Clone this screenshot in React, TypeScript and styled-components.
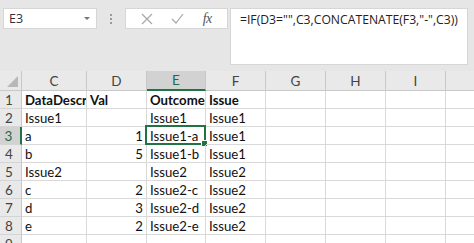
import React from "react";
import styled, { createGlobalStyle } from "styled-components";

const GlobalStyle = createGlobalStyle`
  html, body {
    margin: 0;
    padding: 0;
    background: #e6e6e6;
  }
  * {
    box-sizing: border-box;
  }
`;

const Sheet = styled.div`
  width: 474px;
  height: 243px;
  overflow: hidden;
  background: #e6e6e6;
  font-family: Lato, "Noto Sans", sans-serif;
`;

const FormulaBar = styled.div`
  display: flex;
  align-items: flex-start;
  height: 65px;
  padding: 8px 6px 0 3px;
  margin-bottom: 6px;
`;

const NameBox = styled.div`
  display: flex;
  align-items: center;
  justify-content: space-between;
  width: 94px;
  height: 21px;
  padding: 0 6px 0 5px;
  background: #fff;
  border: 1px solid #d6d6d6;
  font-family: "Open Sans", sans-serif;
  font-size: 12.5px;
  color: #333;
`;

const Caret = styled.span`
  width: 0;
  height: 0;
  border-left: 3px solid transparent;
  border-right: 3px solid transparent;
  border-top: 3px solid #777;
`;

const Grip = styled.div`
  display: flex;
  flex-direction: column;
  gap: 2px;
  width: 28px;
  height: 21px;
  align-items: center;
  justify-content: center;
`;

const GripDot = styled.span`
  width: 2px;
  height: 2px;
  background: #9a9a9a;
`;

const ButtonBox = styled.div`
  display: flex;
  align-items: center;
  justify-content: space-around;
  width: 103px;
  height: 21px;
  background: #fff;
  border: 1px solid #d6d6d6;
  padding: 0 6px;
`;

const FxLabel = styled.span`
  font-family: "Liberation Serif", serif;
  font-style: italic;
  font-size: 14px;
  color: #555;
  letter-spacing: -0.5px;
`;

const FormulaInput = styled.div`
  flex: 1;
  height: 57px;
  margin-left: 2px;
  padding: 2px 0 0 9px;
  background: #fff;
  border: 1px solid #d6d6d6;
  font-family: "Open Sans", sans-serif;
  font-size: 12.2px;
  color: #222;
  white-space: nowrap;
  overflow: hidden;
`;

const Grid = styled.div`
  display: grid;
  grid-template-columns: 22px 65px 60px 59px 60px 60px 60px 60px 70px;
  grid-auto-rows: 18px;
  grid-template-rows: 20px;
  background: #fff;
`;

const Corner = styled.div`
  background: #e9e9e9;
  border-right: 1px solid #c8c8c8;
  border-bottom: 1px solid #c8c8c8;
  display: flex;
  align-items: flex-end;
  justify-content: flex-end;
  padding: 0 3px 3px 0;
`;

const ColHead = styled.div<{ $active?: boolean }>`
  display: flex;
  align-items: center;
  justify-content: center;
  background: ${(p) => (p.$active ? "#d2d2d2" : "#e9e9e9")};
  border-right: 1px solid #c8c8c8;
  border-bottom: ${(p) => (p.$active ? "2px solid #217346" : "1px solid #c8c8c8")};
  color: ${(p) => (p.$active ? "#1e6b41" : "#444")};
  font-size: 13.5px;
`;

const RowHead = styled.div<{ $active?: boolean }>`
  display: flex;
  align-items: center;
  justify-content: center;
  background: ${(p) => (p.$active ? "#d2d2d2" : "#e9e9e9")};
  border-right: ${(p) => (p.$active ? "2px solid #217346" : "1px solid #c8c8c8")};
  border-bottom: 1px solid #d4d4d4;
  color: ${(p) => (p.$active ? "#1e6b41" : "#444")};
  font-size: 13.5px;
  padding-right: 3px;
`;

const Cell = styled.div<{ $num?: boolean; $bold?: boolean; $selected?: boolean }>`
  position: relative;
  display: flex;
  align-items: center;
  justify-content: ${(p) => (p.$num ? "flex-end" : "flex-start")};
  padding: 0 3px;
  border-right: 1px solid #d9d9d9;
  border-bottom: 1px solid #d9d9d9;
  font-size: 13.2px;
  font-weight: ${(p) => (p.$bold ? 700 : 400)};
  color: #111;
  white-space: nowrap;
  overflow: ${(p) => (p.$selected ? "visible" : "hidden")};

  ${(p) =>
    p.$selected &&
    `
    &::before {
      content: "";
      position: absolute;
      left: -2px;
      top: -2px;
      right: -1px;
      bottom: -1px;
      border: 2px solid #217346;
      pointer-events: none;
    }
    &::after {
      content: "";
      position: absolute;
      right: -3px;
      bottom: -3px;
      width: 5px;
      height: 5px;
      background: #217346;
      border: 1px solid #fff;
    }
  `}
`;

const columns = ["C", "D", "E", "F", "G", "H", "I", "J"];

type Row = [string, string, string, string];

const rows: Row[] = [
  ["DataDescr", "Val", "Outcome", "Issue"],
  ["Issue1", "", "Issue1", "Issue1"],
  ["a", "1", "Issue1-a", "Issue1"],
  ["b", "5", "Issue1-b", "Issue1"],
  ["Issue2", "", "Issue2", "Issue2"],
  ["c", "2", "Issue2-c", "Issue2"],
  ["d", "3", "Issue2-d", "Issue2"],
  ["e", "2", "Issue2-e", "Issue2"],
  ["", "", "", ""],
];

const CancelIcon = () => (
  <svg width="12" height="12" viewBox="0 0 12 12">
    <path d="M1 1 L11 11 M11 1 L1 11" stroke="#a8a8a8" strokeWidth="1.2" fill="none" />
  </svg>
);

const CheckIcon = () => (
  <svg width="13" height="11" viewBox="0 0 13 11">
    <path d="M1 6 L5 10 L12 1" stroke="#a8a8a8" strokeWidth="1.2" fill="none" />
  </svg>
);

const CornerMark = () => (
  <svg width="11" height="11" viewBox="0 0 11 11">
    <path d="M11 0 L11 11 L0 11 Z" fill="#b8b8b8" />
  </svg>
);

export default function App() {
  return (
    <Sheet>
      <GlobalStyle />
      <FormulaBar>
        <NameBox>
          E3
          <Caret />
        </NameBox>
        <Grip>
          <GripDot />
          <GripDot />
          <GripDot />
        </Grip>
        <ButtonBox>
          <CancelIcon />
          <CheckIcon />
          <FxLabel>fx</FxLabel>
        </ButtonBox>
        <FormulaInput>=IF(D3="",C3,CONCATENATE(F3,"-",C3))</FormulaInput>
      </FormulaBar>
      <Grid>
        <Corner>
          <CornerMark />
        </Corner>
        {columns.map((c) => (
          <ColHead key={c} $active={c === "E"}>
            {c}
          </ColHead>
        ))}
        {rows.map((r, i) => (
          <React.Fragment key={i}>
            <RowHead $active={i === 2}>{i + 1}</RowHead>
            <Cell $bold={i === 0}>{r[0]}</Cell>
            <Cell $bold={i === 0} $num={i > 0}>
              {r[1]}
            </Cell>
            <Cell $bold={i === 0} $selected={i === 2}>
              {r[2]}
            </Cell>
            <Cell $bold={i === 0}>{r[3]}</Cell>
            <Cell />
            <Cell />
            <Cell />
            <Cell />
          </React.Fragment>
        ))}
      </Grid>
    </Sheet>
  );
}
